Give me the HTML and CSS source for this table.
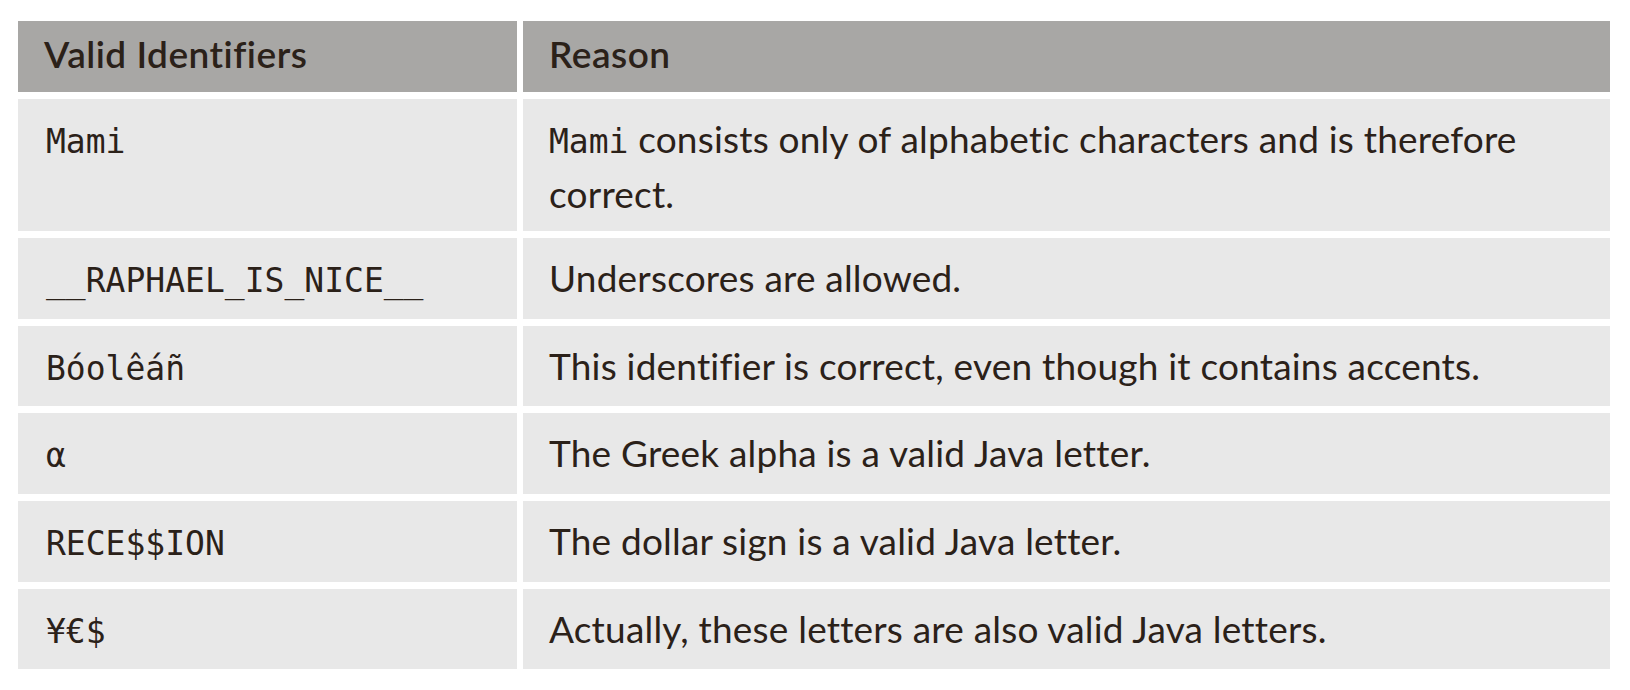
FILE: index.html
```html
<!DOCTYPE html>
<html lang="en">
<head>
<meta charset="utf-8">
<title>Valid Identifiers</title>
<link rel="stylesheet" href="styles.css">
</head>
<body>
<div class="page">
  <div class="ident-table">
    <div class="cell head">Valid Identifiers</div>
    <div class="cell head">Reason</div>

    <div class="cell id two-line"><code>Mami</code></div>
    <div class="cell two-line"><code>Mami</code> consists only of alphabetic characters and is therefore correct.</div>

    <div class="cell id"><code>__RAPHAEL_IS_NICE__</code></div>
    <div class="cell">Underscores are allowed.</div>

    <div class="cell id"><code>Bóolêáñ</code></div>
    <div class="cell">This identifier is correct, even though it contains accents.</div>

    <div class="cell id"><code>α</code></div>
    <div class="cell">The Greek alpha is a valid Java letter.</div>

    <div class="cell id"><code>RECE$$ION</code></div>
    <div class="cell">The dollar sign is a valid Java letter.</div>

    <div class="cell id"><code>¥€$</code></div>
    <div class="cell">Actually, these letters are also valid Java letters.</div>
  </div>
</div>
</body>
</html>
```

FILE: styles.css
```css
html, body {
  margin: 0;
  padding: 0;
  background: #ffffff;
}

.page {
  padding: 20.7px 20px 0 18px;
}

.ident-table {
  display: grid;
  grid-template-columns: 499px 1fr;
  column-gap: 6px;
  row-gap: 7px;
  font-family: "Lato", "Liberation Sans", sans-serif;
  font-size: 37px;
  letter-spacing: 0.2px;
  font-variant-ligatures: none;
  line-height: 52px;
  color: #2b2119;
}

.cell {
  background: #e8e8e8;
  padding: 14px 20px 14.6px 26px;
  box-sizing: border-box;
  height: 80.6px;
}

.cell.two-line {
  height: 132.6px;
}

.cell.id {
  padding-left: 28px;
}

.cell.head {
  background: #a8a7a5;
  font-weight: 600;
  letter-spacing: 0.5px;
  height: 71px;
  padding-top: 7.3px;
  padding-bottom: 0;
}

code {
  font-family: "DejaVu Sans Mono", "Liberation Mono", monospace;
  font-size: 33px;
  letter-spacing: 0;
}
```
